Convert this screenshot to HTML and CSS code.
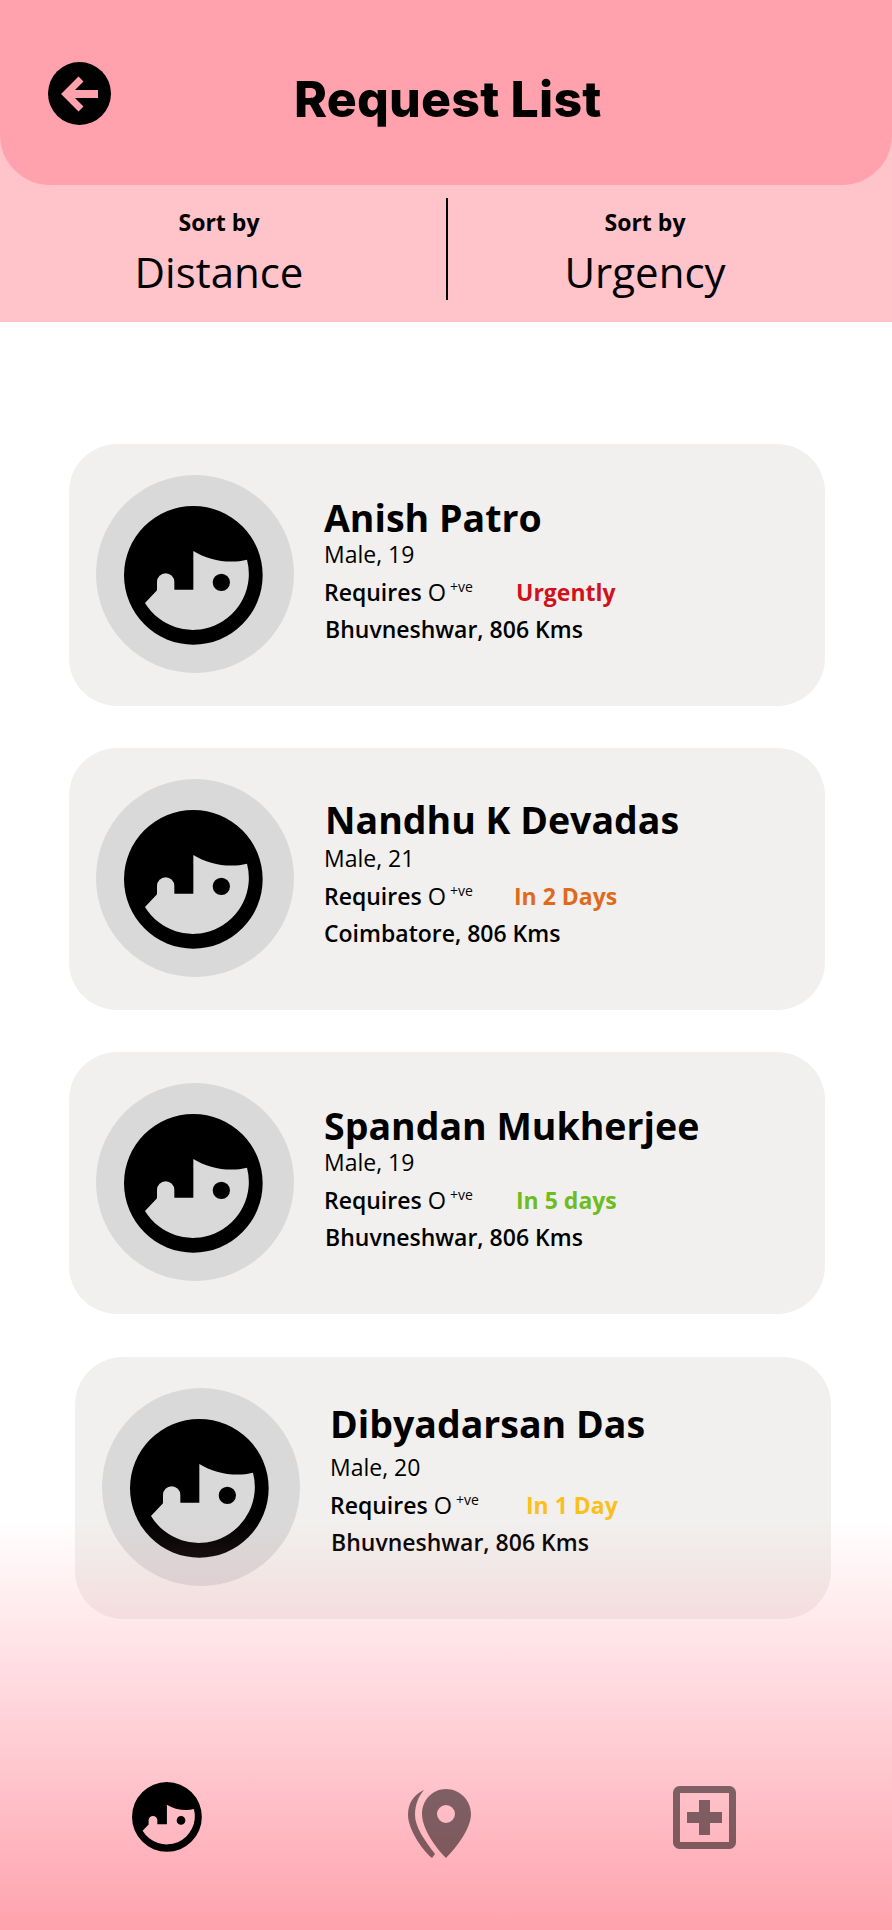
FILE: index.html
```html
<!DOCTYPE html>
<html lang="en">
<head>
    <meta charset="UTF-8" />
    <meta name="viewport" content="width=device-width, initial-scale=1.0"/>
    <title>Request List</title>
    <link rel="stylesheet" href="styles.css">
</head>
<body>
<svg class="icon-defs" aria-hidden="true">
    <symbol id="face" viewBox="73 47 417 417">
        <path fill-rule="evenodd" d="M281 47a208 208 0 1 0 0 416a208 208 0 1 0 0-416zM281 182C325 210 390 222 442 208A168 168 0 0 1 136 338L172 300V275A26 26 0 0 1 224 275V298H281zM365 250a26 26 0 1 0 0 52a26 26 0 1 0 0-52z"/>
    </symbol>
</svg>

<div class="top-area">
    <header class="top-bar">
        <button class="back-btn" aria-label="Back">
            <svg viewBox="0 0 63 63" width="63" height="63">
                <circle cx="31.5" cy="31.5" r="31.5" fill="#000"/>
                <path d="M33 17L18 32L33 47" fill="none" stroke="#ffa2ae" stroke-width="7"/>
                <path d="M18 32H50" fill="none" stroke="#ffa2ae" stroke-width="8"/>
            </svg>
        </button>
        <h1>Request List</h1>
    </header>

    <div class="sort-bar">
        <div class="sort-item sort-distance">
            <span class="sort-label">Sort by</span>
            <span class="sort-value">Distance</span>
        </div>
        <div class="sort-item sort-urgency">
            <span class="sort-label">Sort by</span>
            <span class="sort-value">Urgency</span>
        </div>
    </div>
</div>

<main class="request-list">
    <div class="card">
        <div class="avatar"><svg class="face-icon"><use href="#face"/></svg></div>
        <div class="info">
            <h3 class="name">Anish Patro</h3>
            <p class="meta">Male, 19</p>
            <p class="needs"><span class="blood">Requires <span class="blood-type">O <sup>+ve</sup></span></span><span class="status urgent">Urgently</span></p>
            <p class="place">Bhuvneshwar, 806 Kms</p>
        </div>
    </div>

    <div class="card card-second">
        <div class="avatar"><svg class="face-icon"><use href="#face"/></svg></div>
        <div class="info">
            <h3 class="name">Nandhu K Devadas</h3>
            <p class="meta">Male, 21</p>
            <p class="needs"><span class="blood">Requires <span class="blood-type">O <sup>+ve</sup></span></span><span class="status soon">In 2 Days</span></p>
            <p class="place">Coimbatore, 806 Kms</p>
        </div>
    </div>

    <div class="card">
        <div class="avatar"><svg class="face-icon"><use href="#face"/></svg></div>
        <div class="info">
            <h3 class="name">Spandan Mukherjee</h3>
            <p class="meta">Male, 19</p>
            <p class="needs"><span class="blood">Requires <span class="blood-type">O <sup>+ve</sup></span></span><span class="status later">In 5 days</span></p>
            <p class="place">Bhuvneshwar, 806 Kms</p>
        </div>
    </div>

    <div class="card card-shifted">
        <div class="avatar"><svg class="face-icon"><use href="#face"/></svg></div>
        <div class="info">
            <h3 class="name">Dibyadarsan Das</h3>
            <p class="meta">Male, 20</p>
            <p class="needs"><span class="blood">Requires <span class="blood-type">O <sup>+ve</sup></span></span><span class="status tomorrow">In 1 Day</span></p>
            <p class="place">Bhuvneshwar, 806 Kms</p>
        </div>
    </div>
</main>

<!-- Fades over the last card -->
<nav class="bottom-nav">
    <svg class="nav-face"><use href="#face"/></svg>
    <svg class="nav-pin" viewBox="0 0 63 69">
        <path d="M38 0C24.500 0 14 11 14 25C14 39 27 58 38 69C49 58 63 39 63 25C63 11 51.500 0 38 0zM38 16a9 9 0 1 1 0 18a9 9 0 1 1 0-18z" fill-rule="evenodd"/>
        <path d="M16 1C5 6 0 15 0 26C0 39 13 60 24 69L27 65C17 52 7 38 7 26C7 16 10 8 16 1z"/>
    </svg>
    <svg class="nav-plus" viewBox="0 0 63 63">
        <rect x="3.500" y="3.500" width="56" height="56" rx="3" fill="none" stroke="#000" stroke-width="7"/>
        <path d="M26 14H37V26H49V37H37V49H26V37H14V26H26z"/>
    </svg>
</nav>
</body>
</html>
```

FILE: styles.css
```css
body {
    margin: 0;
    height: 1930px;
    overflow: hidden;
    position: relative;
    background-color: white;
    font-family: "Open Sans", sans-serif;
    color: black;
}

.icon-defs {
    display: none;
}

.top-area {
    height: 322px;
    background-color: #ffc3ca;
}

.top-bar {
    height: 185px;
    background-color: #ffa2ae;
    border-radius: 0 0 50px 50px;
    display: flex;
    align-items: flex-start;
    padding-left: 48px;
}

.back-btn {
    margin-top: 62px;
    padding: 0;
    border: none;
    background: none;
    line-height: 0;
}

.top-bar h1 {
    margin: 68px 0 0 183px;
    font-family: Inter, sans-serif;
    font-size: 50px;
    font-weight: 800;
    line-height: 62px;
    letter-spacing: 0.2px;
}

.sort-bar {
    display: flex;
    align-items: flex-start;
    padding-top: 13px;
}

.sort-item {
    height: 102px;
    box-sizing: border-box;
    display: flex;
    flex-direction: column;
    align-items: center;
}

.sort-distance {
    flex: 0 0 448px;
    border-right: 2px solid black;
    padding-right: 8px;
}

.sort-urgency {
    flex: 1;
    padding-right: 50px;
}

.sort-label {
    margin-top: 9px;
    font-size: 23px;
    font-weight: 700;
    line-height: 30px;
}

.sort-value {
    margin-top: 6px;
    font-size: 42px;
    line-height: 58px;
}

.request-list {
    padding: 122px 0 0 69px;
    display: flex;
    flex-direction: column;
    gap: 42px;
}

.card {
    width: 756px;
    height: 262px;
    box-sizing: border-box;
    padding: 31px 0 0 27px;
    background-color: #f1f0ee;
    border-radius: 48px;
    display: flex;
    gap: 30px;
}

.card-shifted {
    margin: 1px 0 0 6px;
}

.avatar {
    width: 198px;
    height: 198px;
    box-sizing: border-box;
    padding: 31px 0 0 28px;
    background-color: #d9d9d9;
    border-radius: 50%;
}

.face-icon {
    display: block;
    width: 139px;
    height: 139px;
}

.info {
    padding-top: 20px;
}

.info p {
    margin: 0;
}

.name {
    margin: 0;
    font-size: 37.5px;
    font-weight: 700;
    line-height: 45px;
}

.card-second .name {
    margin: -2px 0 2px 1px;
}

.card-shifted .name {
    margin: -7px 0 7px;
}

.meta {
    font-size: 23px;
    line-height: 29px;
}

.info .needs {
    margin-top: 5px;
    display: flex;
    align-items: baseline;
    font-size: 23px;
    font-weight: 600;
    line-height: 36px;
}

.blood {
    width: 192px;
}

.blood-type {
    font-weight: 400;
    font-size: 23.5px;
}

.blood-type sup {
    margin-left: -2px;
    font-size: 14px;
    line-height: 0;
}

.info .place {
    margin-top: 1px;
    padding-left: 1px;
    font-size: 23px;
    font-weight: 600;
    line-height: 37px;
}

.card-second .place {
    padding-left: 0;
}

.status {
    font-size: 23px;
    font-weight: 700;
}

.urgent {
    color: #d0121b;
}

.soon {
    margin-left: -2px;
    color: #e06a1b;
}

.later {
    color: #6dbd21;
}

.tomorrow {
    margin-left: 4px;
    color: #fbc01b;
}

.bottom-nav {
    position: absolute;
    left: 0;
    right: 0;
    bottom: 0;
    height: 410px;
    background: linear-gradient(rgba(255, 162, 174, 0), #ffa2ae);
    pointer-events: none;
}

.nav-face {
    position: absolute;
    left: 132px;
    top: 262px;
    width: 70px;
    height: 70px;
}

.nav-pin {
    position: absolute;
    left: 408px;
    top: 269px;
    width: 63px;
    height: 69px;
    opacity: 0.5;
}

.nav-plus {
    position: absolute;
    left: 673px;
    top: 266px;
    width: 63px;
    height: 63px;
    opacity: 0.5;
}
```
